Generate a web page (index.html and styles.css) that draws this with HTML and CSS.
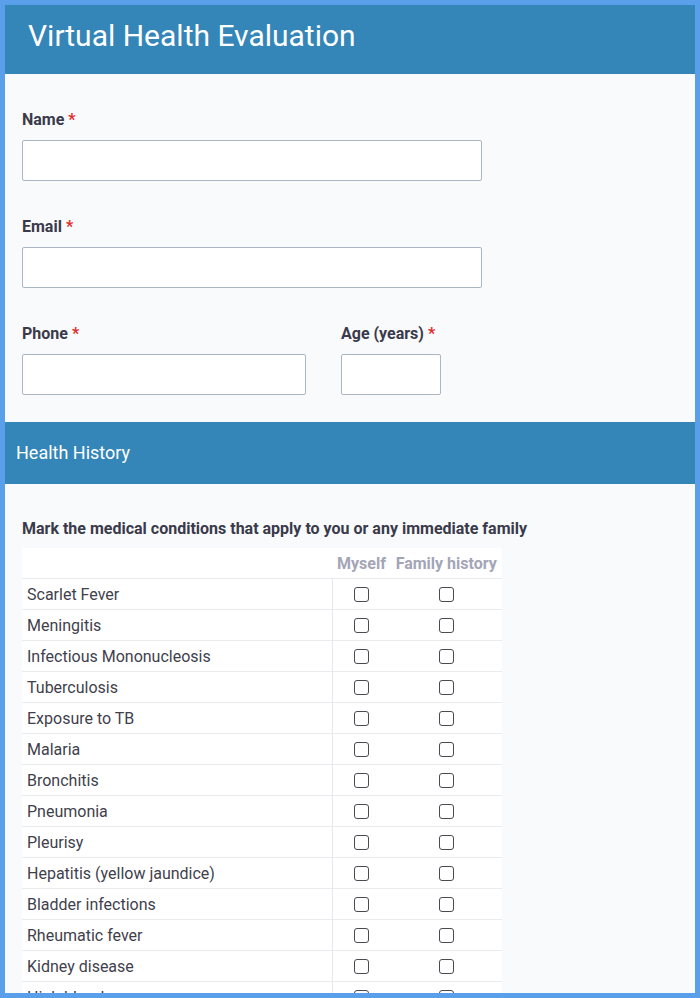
FILE: index.html
```html
<!DOCTYPE html>
<html lang="en">
<head>
    <meta charset="UTF-8">
    <meta name="viewport" content="width=device-width, initial-scale=1.0">
    <title>Virtual Health Evaluation</title>
    <link rel="stylesheet" href="styles.css">
</head>
<body>
    <div class="card">
        <header class="form-header">
            <h1>Virtual Health Evaluation</h1>
        </header>

        <section class="form-body">
            <div class="field">
                <label class="field-label">Name <span class="req">*</span></label>
                <input class="text-input wide" type="text">
            </div>
            <div class="field">
                <label class="field-label">Email <span class="req">*</span></label>
                <input class="text-input wide" type="email">
            </div>
            <div class="field-row">
                <div class="field">
                    <label class="field-label">Phone <span class="req">*</span></label>
                    <input class="text-input phone" type="tel">
                </div>
                <div class="field">
                    <label class="field-label">Age (years) <span class="req">*</span></label>
                    <input class="text-input age" type="text">
                </div>
            </div>
        </section>

        <div class="section-bar">Health History</div>

        <section class="form-body history">
            <p class="field-label">Mark the medical conditions that apply to you or any immediate family</p>
            <table class="matrix">
                <thead>
                    <tr>
                        <th class="cond"></th>
                        <th class="col-self">Myself</th>
                        <th class="col-family">Family history</th>
                    </tr>
                </thead>
                <tbody>
                    <tr><td class="cond">Scarlet Fever</td><td><input type="checkbox"></td><td><input type="checkbox"></td></tr>
                    <tr><td class="cond">Meningitis</td><td><input type="checkbox"></td><td><input type="checkbox"></td></tr>
                    <tr><td class="cond">Infectious Mononucleosis</td><td><input type="checkbox"></td><td><input type="checkbox"></td></tr>
                    <tr><td class="cond">Tuberculosis</td><td><input type="checkbox"></td><td><input type="checkbox"></td></tr>
                    <tr><td class="cond">Exposure to TB</td><td><input type="checkbox"></td><td><input type="checkbox"></td></tr>
                    <tr><td class="cond">Malaria</td><td><input type="checkbox"></td><td><input type="checkbox"></td></tr>
                    <tr><td class="cond">Bronchitis</td><td><input type="checkbox"></td><td><input type="checkbox"></td></tr>
                    <tr><td class="cond">Pneumonia</td><td><input type="checkbox"></td><td><input type="checkbox"></td></tr>
                    <tr><td class="cond">Pleurisy</td><td><input type="checkbox"></td><td><input type="checkbox"></td></tr>
                    <tr><td class="cond">Hepatitis (yellow jaundice)</td><td><input type="checkbox"></td><td><input type="checkbox"></td></tr>
                    <tr><td class="cond">Bladder infections</td><td><input type="checkbox"></td><td><input type="checkbox"></td></tr>
                    <tr><td class="cond">Rheumatic fever</td><td><input type="checkbox"></td><td><input type="checkbox"></td></tr>
                    <tr><td class="cond">Kidney disease</td><td><input type="checkbox"></td><td><input type="checkbox"></td></tr>
                    <tr><td class="cond">High blood pressure</td><td><input type="checkbox"></td><td><input type="checkbox"></td></tr>
                    <tr><td class="cond">Heart disease</td><td><input type="checkbox"></td><td><input type="checkbox"></td></tr>
                </tbody>
            </table>
        </section>
    </div>
</body>
</html>
```

FILE: styles.css
```css
html, body {
    margin: 0;
    height: 100%;
}
body {
    font-family: Roboto, "Liberation Sans", Arial, sans-serif;
    background-color: #5a9fea; /* blue frame */
    padding: 5px;
    box-sizing: border-box;
    color: #3c3c4c;
}
.card {
    background-color: #f9fafb;
    height: 100%;
    overflow: hidden;
}
.form-header {
    background-color: #3485b8;
    height: 69px;
    padding-left: 23px;
    display: flex;
    align-items: center;
}
.form-header h1 {
    margin: 0;
    color: #fff;
    font-size: 30px;
    font-weight: 400;
    line-height: 1;
    padding-bottom: 8px;
}
.form-body {
    padding: 36px 17px 27px;
}
.field {
    display: flex;
    flex-direction: column;
    margin-bottom: 36px;
}
.field-row .field {
    margin-bottom: 0;
}
.field-label {
    font-size: 16px;
    font-weight: 700;
    line-height: 20px;
    color: #3a3a4a;
    margin: 0 0 10px;
}
.req {
    color: #e12b2b;
}
.text-input {
    height: 41px;
    box-sizing: border-box;
    border: 1px solid #aab6c4;
    border-radius: 2px;
    background-color: #fff;
    font: inherit;
    padding: 0 8px;
}
.wide {
    width: 460px;
}
.field-row {
    display: flex;
    gap: 35px;
}
.phone {
    width: 284px;
}
.age {
    width: 100px;
}
.section-bar {
    background-color: #3485b8;
    color: #fff;
    font-size: 18px;
    height: 62px;
    line-height: 62px;
    padding-left: 11px;
}
.history {
    padding-top: 35px;
}
.history .field-label {
    margin-bottom: 9px;
}
/* 체크박스 표 */
.matrix {
    border-collapse: collapse;
    width: 480px;
    background-color: #fff;
    font-size: 16px;
}
.matrix th {
    color: #a3a5b7;
    font-weight: 700;
    height: 30px;
    padding: 0;
    text-align: center;
    white-space: nowrap;
}
.matrix td {
    height: 30px;
    padding: 0;
    border-top: 1px solid #e9ebee;
    text-align: center;
}
.matrix .cond {
    width: 305px;
    text-align: left;
    padding-left: 5px;
    border-right: 1px solid #e6e7ea;
    color: #3f3f4d;
}
.matrix th.cond {
    border-right: none;
}
.matrix .col-self {
    width: 58px;
}
.matrix input[type="checkbox"] {
    appearance: none;
    -webkit-appearance: none;
    width: 15px;
    height: 15px;
    margin: 4px 0 0;
    border: 1.5px solid #4a4a52;
    border-radius: 3px;
    background-color: #fff;
    box-sizing: border-box;
}
```
